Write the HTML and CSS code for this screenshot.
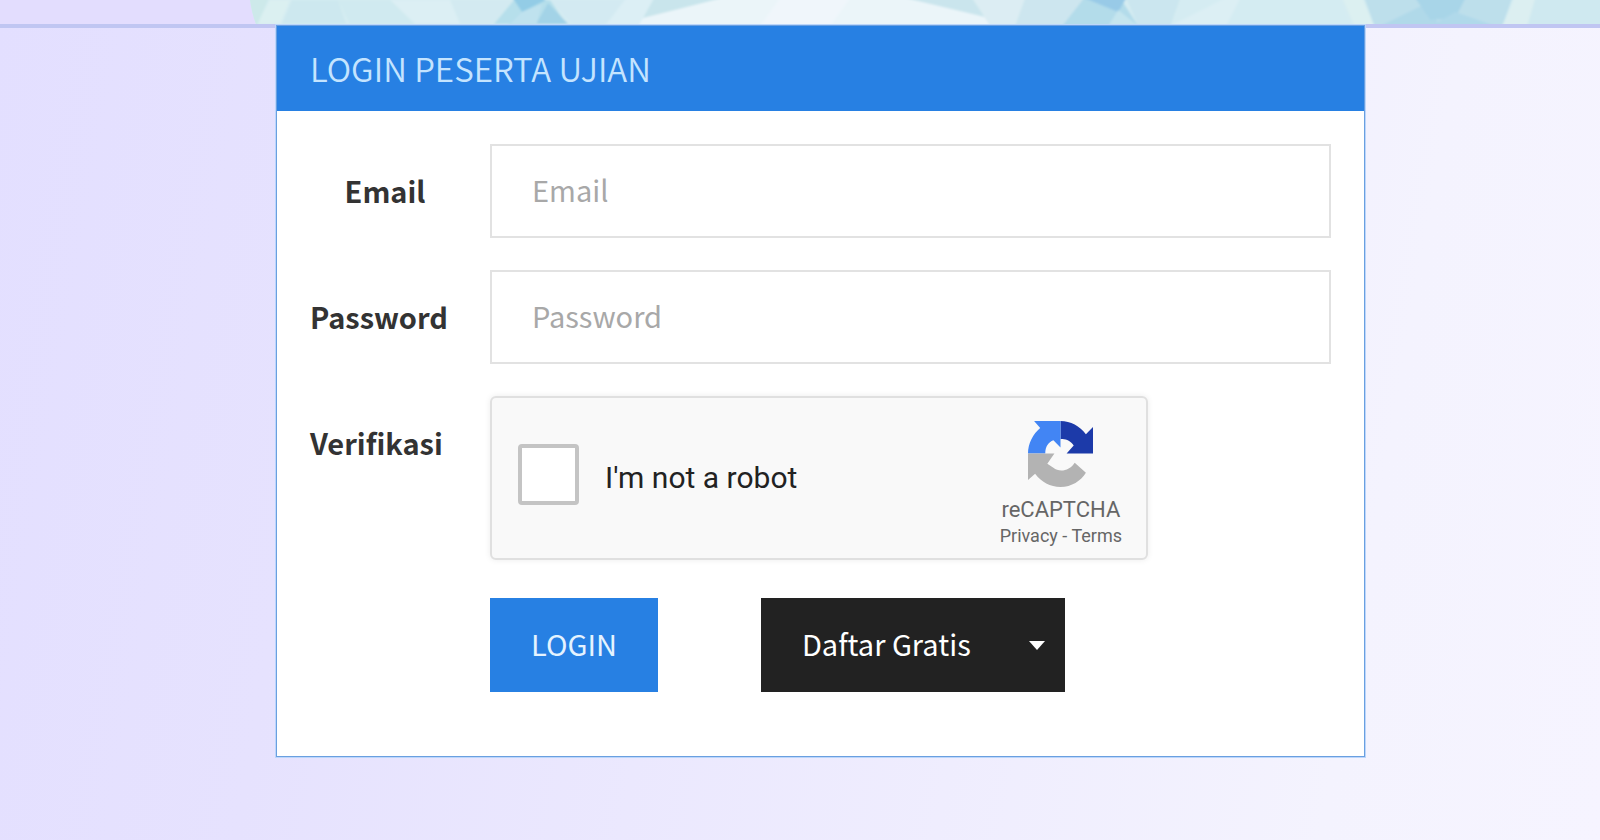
FILE: index.html
```html
<!DOCTYPE html>
<html lang="id">
<head>
<meta charset="utf-8">
<meta name="viewport" content="width=device-width, initial-scale=1">
<title>Login Peserta Ujian</title>
<link rel="stylesheet" href="styles.css">
</head>
<body>
<header class="banner">
  <svg class="banner-art" viewBox="0 0 1350 24" preserveAspectRatio="none" aria-hidden="true">
    <defs>
      <filter id="soften" x="0" y="0" width="1" height="1"><feGaussianBlur stdDeviation="1"/></filter>
      <clipPath id="edge"><path d="M0 0H1350V24H6Q2 14 0 0Z"/></clipPath>
    </defs>
    <g clip-path="url(#edge)">
      <path d="M0 0H1350V24H0Z" fill="#d5ecf2"/>
      <g filter="url(#soften)">
        <path d="M-5 -5H1355V29H-5Z" fill="#d5ecf2"/>
        <path d="M6 24L20 0H40L30 24Z" fill="#dbf0f1"/>
        <path d="M-4 -4H20L6 28H-4Z" fill="#cde9ea"/>
        <path d="M32 24L42 0H88L96 24Z" fill="#cde8ef"/>
        <path d="M88 0H160L200 24H100Z" fill="#d0eaf0"/>
        <path d="M140 0L205 0L215 24H165Z" fill="#dceff4"/>
        <path d="M200 0H265L245 24H210Z" fill="#d3eaf1"/>
        <path d="M244 24L264 0H300L316 24Z" fill="#b6dfeb"/>
        <path d="M262 -3H290L296 0L272 12Z" fill="#93cce6"/>
        <path d="M286 24L298 3L318 24Z" fill="#a3d3e7"/>
        <path d="M258 26L272 12L292 4L286 26Z" fill="#bfe2ee"/>
        <path d="M300 0H375L355 24H322Z" fill="#d3eaf2"/>
        <path d="M355 26L376 -2H408L392 20L390 26Z" fill="#dceff5"/>
        <path d="M393 18L404 -2H472L440 7Z" fill="#c9e5ec"/>
        <path d="M388 26L393 18L472 -2H660L735 17L740 26Z" fill="#ebf5f9"/>
        <path d="M510 26L530 -2H600L580 26Z" fill="#f0f6fb"/>
        <path d="M655 -2H722L735 17Z" fill="#cae5ed"/>
        <path d="M722 -2H775L765 26H740Z" fill="#dcedf3"/>
        <path d="M775 -2H836L812 26H765Z" fill="#cde6ef"/>
        <path d="M812 26L834 -2H870L888 26Z" fill="#b3dcea"/>
        <path d="M834 -2H876L868 12Z" fill="#98cae7"/>
        <path d="M858 26L868 10L888 26Z" fill="#c5e5ee"/>
        <path d="M888 26L876 -2H930L920 26Z" fill="#cbe6ef"/>
        <path d="M920 26L975 -2H1010L976 26Z" fill="#dceff4"/>
        <path d="M990 -2H1090L1100 26H976Z" fill="#d4ecf2"/>
        <path d="M1092 -2H1112L1124 26H1104Z" fill="#dcf0f1"/>
        <path d="M1114 -2H1262L1252 26H1124Z" fill="#bddfeb"/>
        <path d="M1130 26L1175 4L1190 26Z" fill="#b0d9e9"/>
        <path d="M1165 -2H1215L1205 18L1180 20Z" fill="#a8d5e8"/>
        <path d="M1205 12L1245 26H1180Z" fill="#b0d9ea"/>
        <path d="M1264 -2H1285L1277 26H1252Z" fill="#dceff1"/>
        <path d="M1285 -2H1354V26H1277Z" fill="#cfe9f0"/>
      </g>
    </g>
  </svg>
</header>
<main class="page">
  <section class="panel">
    <h1 class="panel-title">LOGIN PESERTA UJIAN</h1>
    <form class="form">
      <label class="label label-center" for="email">Email</label>
      <input class="field" id="email" type="email" placeholder="Email">
      <label class="label" for="password">Password</label>
      <input class="field" id="password" type="password" placeholder="Password">
      <label class="label" for="robot">Verifikasi</label>
      <div class="captcha">
        <input class="captcha-box" id="robot" type="checkbox">
        <label class="captcha-text" for="robot">I'm not a robot</label>
        <div class="captcha-brand">
          <svg class="captcha-logo" viewBox="0 0 64 64" aria-hidden="true">
            <path d="M64 32V6L57 13C51 5 42 0 32 0V18C37 17 42 20 45 24L38 32Z" fill="#1c3aa9"/>
            <path d="M32 0H6L12 7C5 13 0 22 0 32H17C17 25 20 21 25 19L32 26Z" fill="#4285f4"/>
            <path d="M0 32V58L7 52C13 60 22 65 32 65C43 65 52 59 57 51L46 41C41 49 31 51 25 46L19 42L26 32Z" fill="#b3b3b3"/>
          </svg>
          <span class="captcha-name">reCAPTCHA</span>
          <span class="captcha-links"><a href="#">Privacy</a> - <a href="#">Terms</a></span>
        </div>
      </div>
      <div class="actions">
        <button class="button button-primary" type="submit">LOGIN</button>
        <button class="button button-dark" type="button">Daftar Gratis
          <svg class="caret" viewBox="0 0 16 9" aria-hidden="true"><path d="M0 0H16L8 9Z" fill="currentColor"/></svg>
        </button>
      </div>
    </form>
  </section>
</main>
</body>
</html>
```

FILE: styles.css
```css
* {
  box-sizing: border-box;
}

body {
  margin: 0;
  min-height: 100vh;
  font-family: "Noto Sans CJK SC", "Noto Sans", sans-serif;
  font-size: 29px;
  line-height: 40px;
  color: #333;
  background: linear-gradient(100deg, #e3dfff 0%, #e6e2fe 22%, #f4f3fe 84%, #f6f4ff 100%);
}

.banner {
  display: flex;
  justify-content: flex-end;
  height: 28px;
  background: #e3ddfe;
  border-bottom: 4px solid #c0c6f2;
}

.banner-art {
  width: 84.4%;
  height: 24px;
}

.page {
  display: flex;
  justify-content: center;
  padding: 0 235px 0 276px;
}

.panel {
  position: relative;
  flex: 1;
  margin-top: -3px;
  background: #fff;
  border: 1px solid #6a9fe0;
  box-shadow: 0 0 0 1px #bcd6fb;
}

.panel-title {
  margin: 0;
  padding: 21px 33px 22px;
  font-size: 33px;
  font-weight: 350;
  line-height: 42px;
  color: #c4e4ff;
  background: #2780e3;
}

.form {
  display: grid;
  grid-template-columns: 138px 1fr;
  gap: 32px 42px;
  padding: 33px 33px 64px;
}

.label {
  padding-top: 26px;
  font-weight: 700;
}

.label-center {
  text-align: center;
  padding-left: 12px;
}

.field {
  width: 100%;
  height: 94px;
  padding: 0 40px 4px;
  font: inherit;
  color: #555;
  background: #fff;
  border: 2px solid #e2e2e2;
  border-radius: 0;
  outline: 0;
}

.field::placeholder {
  color: #a8a8a8;
  opacity: 1;
}

.captcha {
  display: flex;
  width: 658px;
  height: 164px;
  padding: 0 24px 0 26px;
  font-family: Roboto, sans-serif;
  background: #f9f9f9;
  border: 2px solid #e0e0e0;
  border-radius: 6px;
  box-shadow: 0 0 6px rgba(0, 0, 0, 0.08);
}

.captcha-box {
  appearance: none;
  flex: none;
  width: 61px;
  height: 61px;
  margin: 46px 0 0;
  background: #fff;
  border: 4px solid #c4c4c4;
  border-radius: 4px;
}

.captcha-box:checked {
  background: #4285f4;
}

.captcha-text {
  align-self: center;
  margin-left: 26px;
  font-size: 30px;
  color: #222;
}

.captcha-brand {
  display: flex;
  flex-direction: column;
  align-items: center;
  margin-left: auto;
  padding-top: 23px;
  color: #666;
}

.captcha-logo {
  width: 65px;
  height: 65px;
  overflow: visible;
}

.captcha-name {
  margin-top: 10px;
  font-size: 22px;
  line-height: 28px;
}

.captcha-links {
  font-size: 18px;
  line-height: 24px;
}

.captcha-links a {
  color: inherit;
  text-decoration: none;
}

.actions {
  display: flex;
  gap: 103px;
  padding-top: 6px;
  grid-column: 2;
}

.button {
  display: flex;
  align-items: center;
  height: 94px;
  padding: 0 41px 4px;
  font: inherit;
  color: #fff;
  border: 0;
}

.button-primary {
  color: #e4f3ff;
  background: #2780e3;
}

.button-dark {
  gap: 58px;
  padding-right: 20px;
  background: #222;
}

.caret {
  width: 16px;
  height: 9px;
  margin-top: 4px;
}
```
